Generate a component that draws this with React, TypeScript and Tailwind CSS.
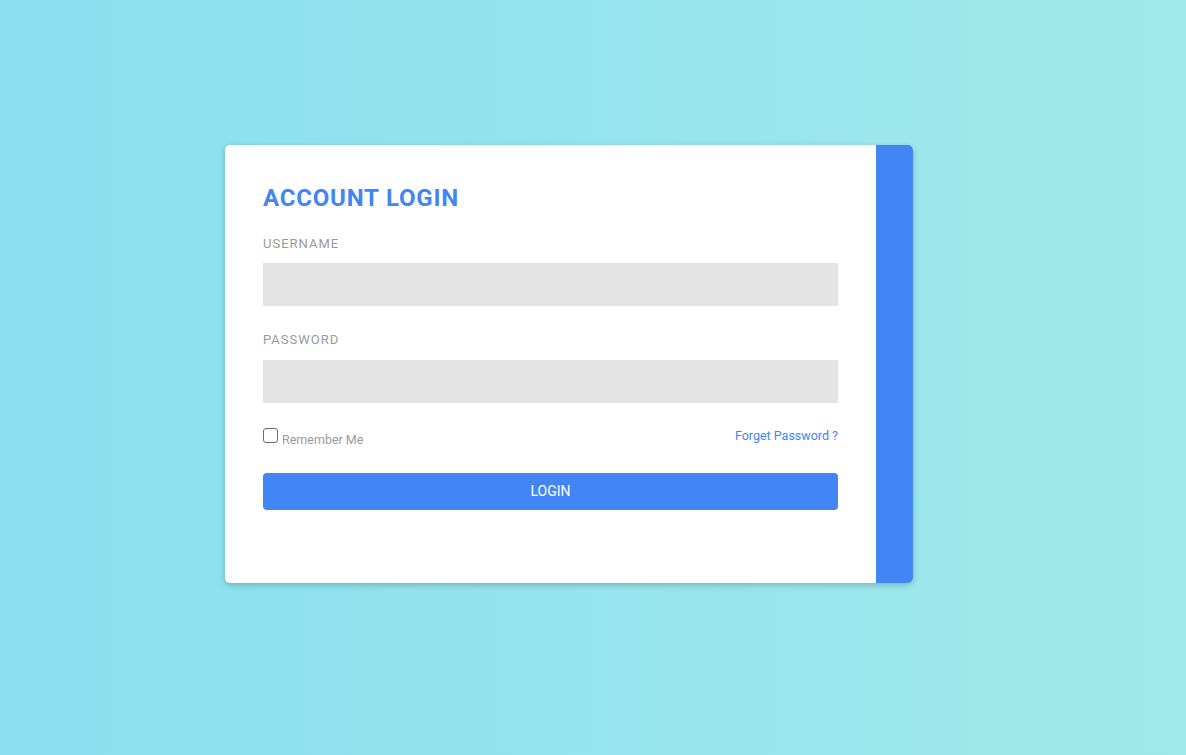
import React, { useState } from "react";

const App = () => {
  const [remember, setRemember] = useState(false);

  return (
    <div
      className="min-h-screen w-full bg-linear-to-r from-[#89dfef] to-[#a0eaeb] pt-[145px] pl-[225px]"
      style={{ fontFamily: "Roboto, 'Liberation Sans', sans-serif" }}
    >
      <div className="flex w-[688px] h-[438px] rounded-[5px] overflow-hidden bg-white shadow-[0_2px_6px_rgba(0,0,0,0.22)]">
        {/* Form */}
        <div className="flex-1 px-[38px] pt-[38.5px]">
          <h1 className="text-[24px] leading-[29px] font-bold tracking-[0.8px] text-[#4285f4]">
            ACCOUNT LOGIN
          </h1>

          <label className="block mt-[23.5px] text-[13px] leading-[16px] tracking-[1px] text-[#9a9a9a]">
            USERNAME
          </label>
          <input
            type="text"
            className="block w-full h-[43px] mt-[11px] bg-[#e4e4e4] px-3 text-sm text-gray-700 outline-none"
          />

          <label className="block mt-[26px] text-[13px] leading-[16px] tracking-[1px] text-[#9a9a9a]">
            PASSWORD
          </label>
          <input
            type="password"
            className="block w-full h-[43px] mt-[12px] bg-[#e4e4e4] px-3 text-sm text-gray-700 outline-none"
          />

          <div className="flex justify-between items-start h-[20px] mt-[25px]">
            <div
              className="flex items-start gap-[4px] cursor-pointer"
              onClick={() => setRemember(!remember)}
            >
              <span className="w-[15px] h-[15px] rounded-[3px] border-[1.5px] border-[#6b6b6b] bg-white flex items-center justify-center">
                {remember && (
                  <svg viewBox="0 0 12 12" className="w-[10px] h-[10px]">
                    <path
                      d="M2 6.5 L5 9 L10 3"
                      fill="none"
                      stroke="#4285f4"
                      strokeWidth="2"
                    />
                  </svg>
                )}
              </span>
              <span className="mt-[4px] text-[12.5px] leading-[16px] text-[#9a9a9a]">
                Remember Me
              </span>
            </div>
            <a
              href="#"
              className="text-[12.5px] leading-[16px] text-[#4285f4]"
            >
              Forget Password ?
            </a>
          </div>

          <button className="block w-full h-[37px] mt-[25px] rounded-[4px] bg-[#4285f4] text-white text-[14px]">
            LOGIN
          </button>
        </div>

        {/* Side strip */}
        <div className="w-[37px] bg-[#4285f4]" />
      </div>
    </div>
  );
};

export default App;
